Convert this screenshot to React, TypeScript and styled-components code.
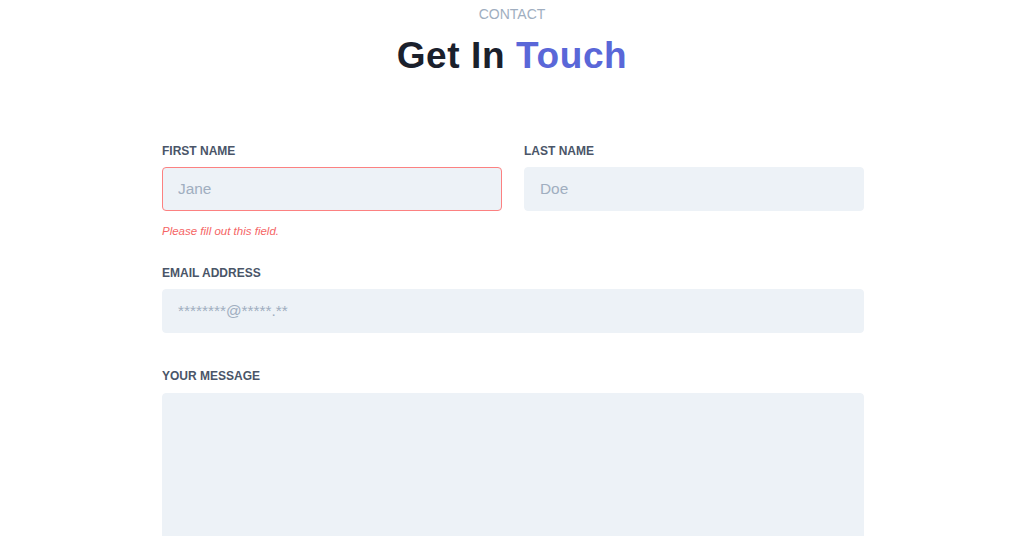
import React from "react";
import styled, { createGlobalStyle } from "styled-components";

const Global = createGlobalStyle`
  html, body { margin: 0; padding: 0; background: #ffffff; }
  body { font-family: "Liberation Sans", Arial, sans-serif; color: #4a5568; }
  * { box-sizing: border-box; }
`;

const Page = styled.section`
  padding: 4px 0 40px;
`;

const Header = styled.header`
  display: flex;
  flex-direction: column;
  align-items: center;
`;

const Eyebrow = styled.p`
  margin: 0;
  font-size: 14px;
  line-height: 20px;
  color: #a0aec0;
  text-transform: uppercase;
`;

const Title = styled.h1`
  margin: 11px 0 0;
  font-size: 37px;
  line-height: 42px;
  font-weight: 700;
  letter-spacing: 0.6px;
  color: #1a202c;
`;

const Accent = styled.span`
  color: #5a67d8;
`;

const Form = styled.form`
  width: 704px;
  margin: 66px auto 0;
  padding-left: 2px;
  display: flex;
  flex-direction: column;
`;

const Row = styled.div<{ $cols?: number; $gap: number }>`
  display: grid;
  grid-template-columns: repeat(${(p) => p.$cols ?? 1}, 1fr);
  column-gap: 22px;
  margin-bottom: ${(p) => p.$gap}px;
`;

const Field = styled.div`
  display: flex;
  flex-direction: column;
`;

const Label = styled.label<{ $space?: number }>`
  display: block;
  font-size: 12px;
  line-height: 16px;
  font-weight: 700;
  text-transform: uppercase;
  color: #4a5568;
  margin-bottom: ${(p) => p.$space ?? 8}px;
`;

const Input = styled.input<{ $error?: boolean }>`
  appearance: none;
  display: block;
  width: 100%;
  height: 44px;
  padding: 0 15px;
  font-family: inherit;
  font-size: 15.4px;
  color: #4a5568;
  background: #edf2f7;
  border: 1px solid ${(p) => (p.$error ? "#fc8181" : "#edf2f7")};
  border-radius: 4px;
  outline: none;
  &::placeholder { color: #a0aec0; }
`;

const TextArea = styled.textarea`
  appearance: none;
  display: block;
  width: 100%;
  height: 200px;
  padding: 12px 15px;
  font-family: inherit;
  font-size: 15.4px;
  color: #4a5568;
  background: #edf2f7;
  border: 1px solid #edf2f7;
  border-radius: 4px;
  outline: none;
  resize: none;
`;

const ErrorText = styled.p`
  margin: 12px 0 0;
  font-size: 11.5px;
  line-height: 16px;
  font-style: italic;
  color: #f56565;
`;

export default function App() {
  return (
    <>
      <Global />
      <Page>
        <Header>
          <Eyebrow>Contact</Eyebrow>
          <Title>
            Get In <Accent>Touch</Accent>
          </Title>
        </Header>
        <Form onSubmit={(e) => e.preventDefault()}>
          <Row $cols={2} $gap={26}>
            <Field>
              <Label htmlFor="first">First Name</Label>
              <Input id="first" placeholder="Jane" $error />
              <ErrorText>Please fill out this field.</ErrorText>
            </Field>
            <Field>
              <Label htmlFor="last">Last Name</Label>
              <Input id="last" placeholder="Doe" />
            </Field>
          </Row>
          <Row $gap={35}>
            <Field>
              <Label htmlFor="email">Email Address</Label>
              <Input id="email" type="email" placeholder="********@*****.**" />
            </Field>
          </Row>
          <Row $gap={0}>
            <Field>
              <Label htmlFor="message" $space={9}>Your Message</Label>
              <TextArea id="message" />
            </Field>
          </Row>
        </Form>
      </Page>
    </>
  );
}
